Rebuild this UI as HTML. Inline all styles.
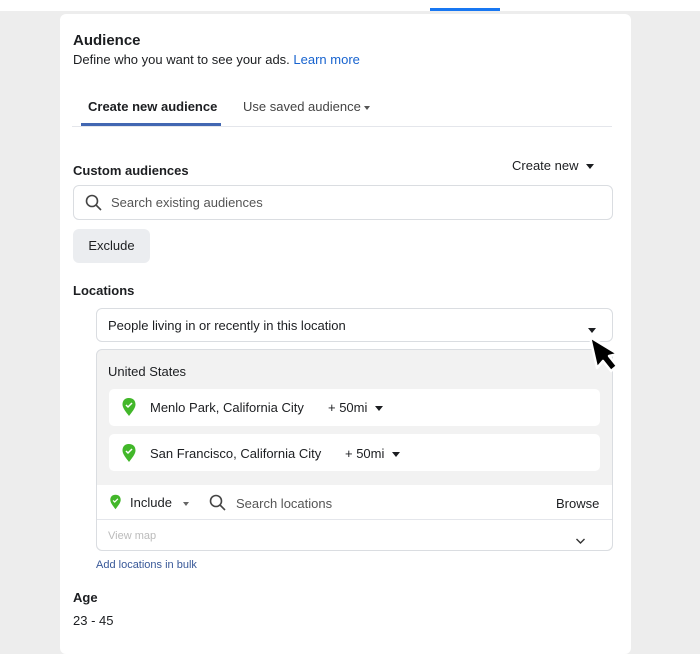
<!DOCTYPE html>
<html><head><style>
*{margin:0;padding:0;box-sizing:border-box}
body{width:700px;height:648px;background:#ededed;font-family:"Liberation Sans",sans-serif;color:#1c1e21;position:relative;overflow:hidden;font-size:13px}
.top{position:absolute;left:0;top:0;width:700px;height:11px;background:#fff}
.bar{position:absolute;left:430px;top:8px;width:70px;height:3px;background:#1877f2}
.card{position:absolute;left:60px;top:14px;width:571px;height:640px;background:#fff;border-radius:6px}
.a{position:absolute;white-space:nowrap}
.box{position:absolute;border:1px solid #dadde1;border-radius:6px;background:#fff}
.tri{display:inline-block;width:0;height:0;border-left:4px solid transparent;border-right:4px solid transparent;border-top:5px solid #1c1e21;vertical-align:middle}
</style></head><body>
<div class="top"></div><div class="bar"></div>
<div class="card"></div>
<div class="a" style="left:73px;top:32px;font-size:15px;font-weight:bold">Audience</div>
<div class="a" style="left:73px;top:52px;font-size:13px">Define who you want to see your ads. <span style="color:#1763cf">Learn more</span></div>
<div class="a" style="left:88px;top:99px;font-size:13px;font-weight:bold">Create new audience</div>
<div class="a" style="left:81px;top:123px;width:140px;height:3px;background:#4267b2"></div>
<div class="a" style="left:72px;top:126px;width:540px;height:1px;background:#e4e6eb"></div>
<div class="a" style="left:243px;top:99px;font-size:13px;color:#444">Use saved audience <span class="tri" style="border-top-color:#555;border-width:4px 3px 0"></span></div>
<div class="a" style="left:73px;top:163px;font-size:13px;font-weight:bold">Custom audiences</div>
<div class="a" style="left:512px;top:158px;font-size:13px">Create new &nbsp;<span class="tri"></span></div>
<div class="box" style="left:73px;top:185px;width:540px;height:35px"></div>
<svg class="a" style="left:85px;top:194px" width="18" height="18" viewBox="0 0 18 18"><circle cx="7" cy="7" r="5.5" fill="none" stroke="#444" stroke-width="1.6"/><path d="M11 11l5 5" stroke="#444" stroke-width="1.6"/></svg>
<div class="a" style="left:111px;top:195px;color:#555">Search existing audiences</div>
<div class="a" style="left:73px;top:229px;width:77px;height:34px;background:#ebedf0;border-radius:6px;text-align:center;line-height:34px">Exclude</div>
<div class="a" style="left:73px;top:283px;font-weight:bold">Locations</div>
<div class="box" style="left:96px;top:308px;width:517px;height:34px"></div>
<div class="a" style="left:108px;top:318px">People living in or recently in this location</div>
<div class="a" style="left:588px;top:322px"><span class="tri"></span></div>
<div class="box" style="left:96px;top:349px;width:517px;height:202px;background:#f2f2f2"></div>
<div class="a" style="left:108px;top:364px">United States</div>
<div class="a" style="left:109px;top:389px;width:491px;height:37px;background:#fff;border-radius:5px"></div>
<div class="a" style="left:109px;top:434px;width:491px;height:37px;background:#fff;border-radius:5px"></div>
<svg class="a" style="left:121px;top:397px" width="16" height="20" viewBox="0 0 16 20"><path d="M8 1C4 1 1.5 3.5 1.5 7.5 1.5 11 5 15 8 19 11 15 14.5 11 14.5 7.5 14.5 3.5 12 1 8 1z" fill="#42b72a"/><path d="M5 8l2 2 4-4" stroke="#fff" stroke-width="1.5" fill="none"/></svg>
<div class="a" style="left:150px;top:400px">Menlo Park, California City</div>
<div class="a" style="left:328px;top:400px">+ 50mi &nbsp;<span class="tri"></span></div>
<svg class="a" style="left:121px;top:443px" width="16" height="20" viewBox="0 0 16 20"><path d="M8 1C4 1 1.5 3.5 1.5 7.5 1.5 11 5 15 8 19 11 15 14.5 11 14.5 7.5 14.5 3.5 12 1 8 1z" fill="#42b72a"/><path d="M5 8l2 2 4-4" stroke="#fff" stroke-width="1.5" fill="none"/></svg>
<div class="a" style="left:150px;top:446px">San Francisco, California City</div>
<div class="a" style="left:345px;top:446px">+ 50mi &nbsp;<span class="tri"></span></div>
<div class="a" style="left:97px;top:485px;width:515px;height:65px;background:#fff;border-radius:0 0 6px 6px"></div>
<div class="a" style="left:97px;top:519px;width:515px;height:1px;background:#e4e6eb"></div>
<svg class="a" style="left:109px;top:494px" width="13" height="16" viewBox="0 0 16 20"><path d="M8 1C4 1 1.5 3.5 1.5 7.5 1.5 11 5 15 8 19 11 15 14.5 11 14.5 7.5 14.5 3.5 12 1 8 1z" fill="#42b72a"/><path d="M5 8l2 2 4-4" stroke="#fff" stroke-width="1.5" fill="none"/></svg>
<div class="a" style="left:130px;top:495px">Include &nbsp;&nbsp;<span class="tri" style="border-top-color:#666;border-width:4px 3px 0"></span></div>
<svg class="a" style="left:209px;top:494px" width="18" height="18" viewBox="0 0 18 18"><circle cx="7" cy="7" r="5.5" fill="none" stroke="#444" stroke-width="1.6"/><path d="M11 11l5 5" stroke="#444" stroke-width="1.6"/></svg>
<div class="a" style="left:236px;top:496px;color:#555">Search locations</div>
<div class="a" style="left:556px;top:496px">Browse</div>
<div class="a" style="left:108px;top:530px;font-size:11px;color:#bbb">View map</div>
<svg class="a" style="left:575px;top:537px" width="11" height="8" viewBox="0 0 11 8"><path d="M1.5 2l4 4 4-4" stroke="#333" stroke-width="1.4" fill="none"/></svg>
<div class="a" style="left:96px;top:559px;font-size:11px;color:#385898">Add locations in bulk</div>
<div class="a" style="left:73px;top:590px;font-weight:bold">Age</div>
<div class="a" style="left:73px;top:613px">23 - 45</div>
<svg class="a" style="left:585px;top:333px" width="42" height="44" viewBox="0 0 42 44"><path d="M5 4L12 35 18 28 26 38 32 33 24 23 33 21z" fill="#000" stroke="#fff" stroke-width="2.5" stroke-linejoin="round"/></svg>
</body></html>
